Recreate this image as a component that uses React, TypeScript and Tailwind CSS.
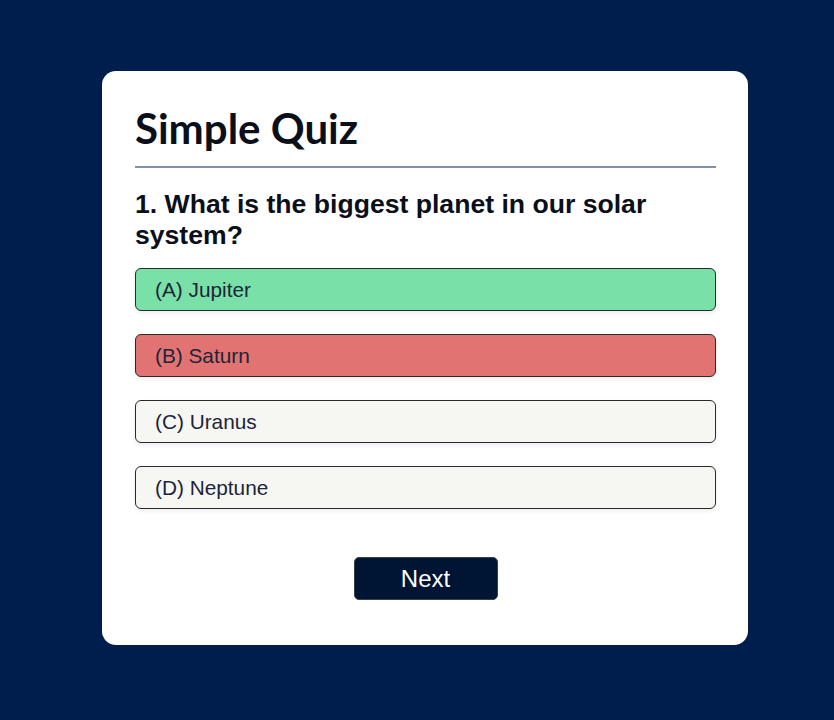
const options = [
  { label: "(A) Jupiter", tone: "bg-[#79e0a7]" },
  { label: "(B) Saturn", tone: "bg-[#e27373]" },
  { label: "(C) Uranus", tone: "bg-[#f6f6f3]" },
  { label: "(D) Neptune", tone: "bg-[#f6f6f3]" },
];

export default function App() {
  return (
    <div className="min-h-screen bg-[#001e4d] pt-[71px] font-['Liberation_Sans',Arial,sans-serif]">
      <div className="ml-[102px] w-[646px] rounded-[14px] bg-white pl-[33px] pr-[32px] pt-[32px] pb-[45px]">
        <h1 className="border-b-[2px] border-[#8390aa] pb-[13px] font-['Lato',sans-serif] text-[42px] leading-[50px] font-bold text-[#0a0f1a]">
          Simple Quiz
        </h1>
        <div className="pt-[21px]">
          <h2 className="text-[26.6px] leading-[31px] font-bold text-[#0a0f1a]">
            1. What is the biggest planet in our solar system?
          </h2>
          <div className="mt-[17px] flex flex-col gap-[23px]">
            {options.map((o) => (
              <button
                key={o.label}
                className={`h-[43px] w-full rounded-[6px] border border-[#2a2a2a] px-[19px] text-left text-[20.8px] text-[#1c2538] shadow-[0_2px_4px_rgba(0,0,0,0.08)] ${o.tone}`}
              >
                {o.label}
              </button>
            ))}
          </div>
          <div className="mt-[48px] flex justify-center">
            <button className="h-[43px] w-[144px] rounded-[5px] border border-[#3a3f4a] bg-[#001433] text-[24px] text-white">
              Next
            </button>
          </div>
        </div>
      </div>
    </div>
  );
}
